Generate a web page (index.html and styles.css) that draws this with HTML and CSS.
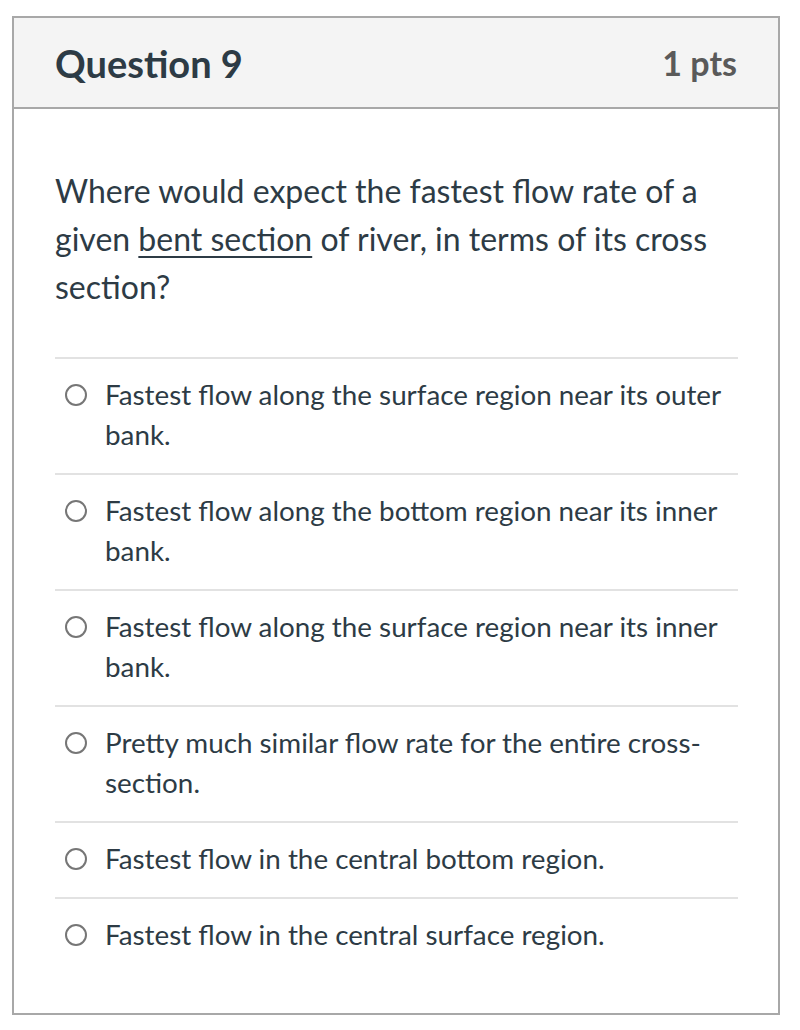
FILE: index.html
```html
<!DOCTYPE html>
<html lang="en">
<head>
<meta charset="utf-8">
<title>Question 9</title>
<link rel="stylesheet" href="styles.css">
</head>
<body>
<div class="question">
  <div class="header">
    <h2 class="title">Question 9</h2>
    <span class="points">1 pts</span>
  </div>
  <div class="content">
    <p class="text">Where would expect the fastest flow rate of a given <u>bent section</u> of river, in terms of its cross section?</p>
    <div class="answers">
      <label class="answer"><span class="radio"></span><span class="label">Fastest flow along the surface region near its outer bank.</span></label>
      <label class="answer"><span class="radio"></span><span class="label">Fastest flow along the bottom region near its inner bank.</span></label>
      <label class="answer"><span class="radio"></span><span class="label">Fastest flow along the surface region near its inner bank.</span></label>
      <label class="answer"><span class="radio"></span><span class="label">Pretty much similar flow rate for the entire cross-section.</span></label>
      <label class="answer"><span class="radio"></span><span class="label">Fastest flow in the central bottom region.</span></label>
      <label class="answer"><span class="radio"></span><span class="label">Fastest flow in the central surface region.</span></label>
    </div>
  </div>
</div>
</body>
</html>
```
FILE: styles.css
```css
html, body {
  margin: 0;
  padding: 0;
  background: #ffffff;
}
body {
  padding: 16px 20px 0 12px;
  font-family: Lato, "Liberation Sans", sans-serif;
  color: #2d3b45;
}
.question {
  width: 764px;
  height: 995px;
  border: 2px solid #a8a8a8;
  box-sizing: content-box;
}
.header {
  height: 89px;
  background: #f4f4f4;
  border-bottom: 2px solid #a8a8a8;
  display: flex;
  align-items: center;
  justify-content: space-between;
  padding: 0 41px 0 41px;
}
.title {
  margin: 0;
  font-size: 38px;
  font-weight: 700;
  color: #2d3b45;
}
.points {
  font-size: 34px;
  font-weight: 700;
  color: #5a5a5a;
}
.content {
  padding: 58px 40px 0 41px;
}
.text {
  margin: 0 0 46px 0;
  font-size: 32px;
  line-height: 48px;
}
.text u {
  text-decoration-thickness: 2px;
  text-underline-offset: 5px;
}
.answer {
  display: flex;
  align-items: flex-start;
  gap: 18px;
  border-top: 2px solid #e2e2e2;
  padding: 16px 0 18px 10px;
  font-size: 27.8px;
  line-height: 40px;
}
.radio {
  flex: none;
  box-sizing: border-box;
  width: 22px;
  height: 22px;
  margin-top: 9px;
  border: 2px solid #767676;
  border-radius: 50%;
  background: #fff;
}
```
